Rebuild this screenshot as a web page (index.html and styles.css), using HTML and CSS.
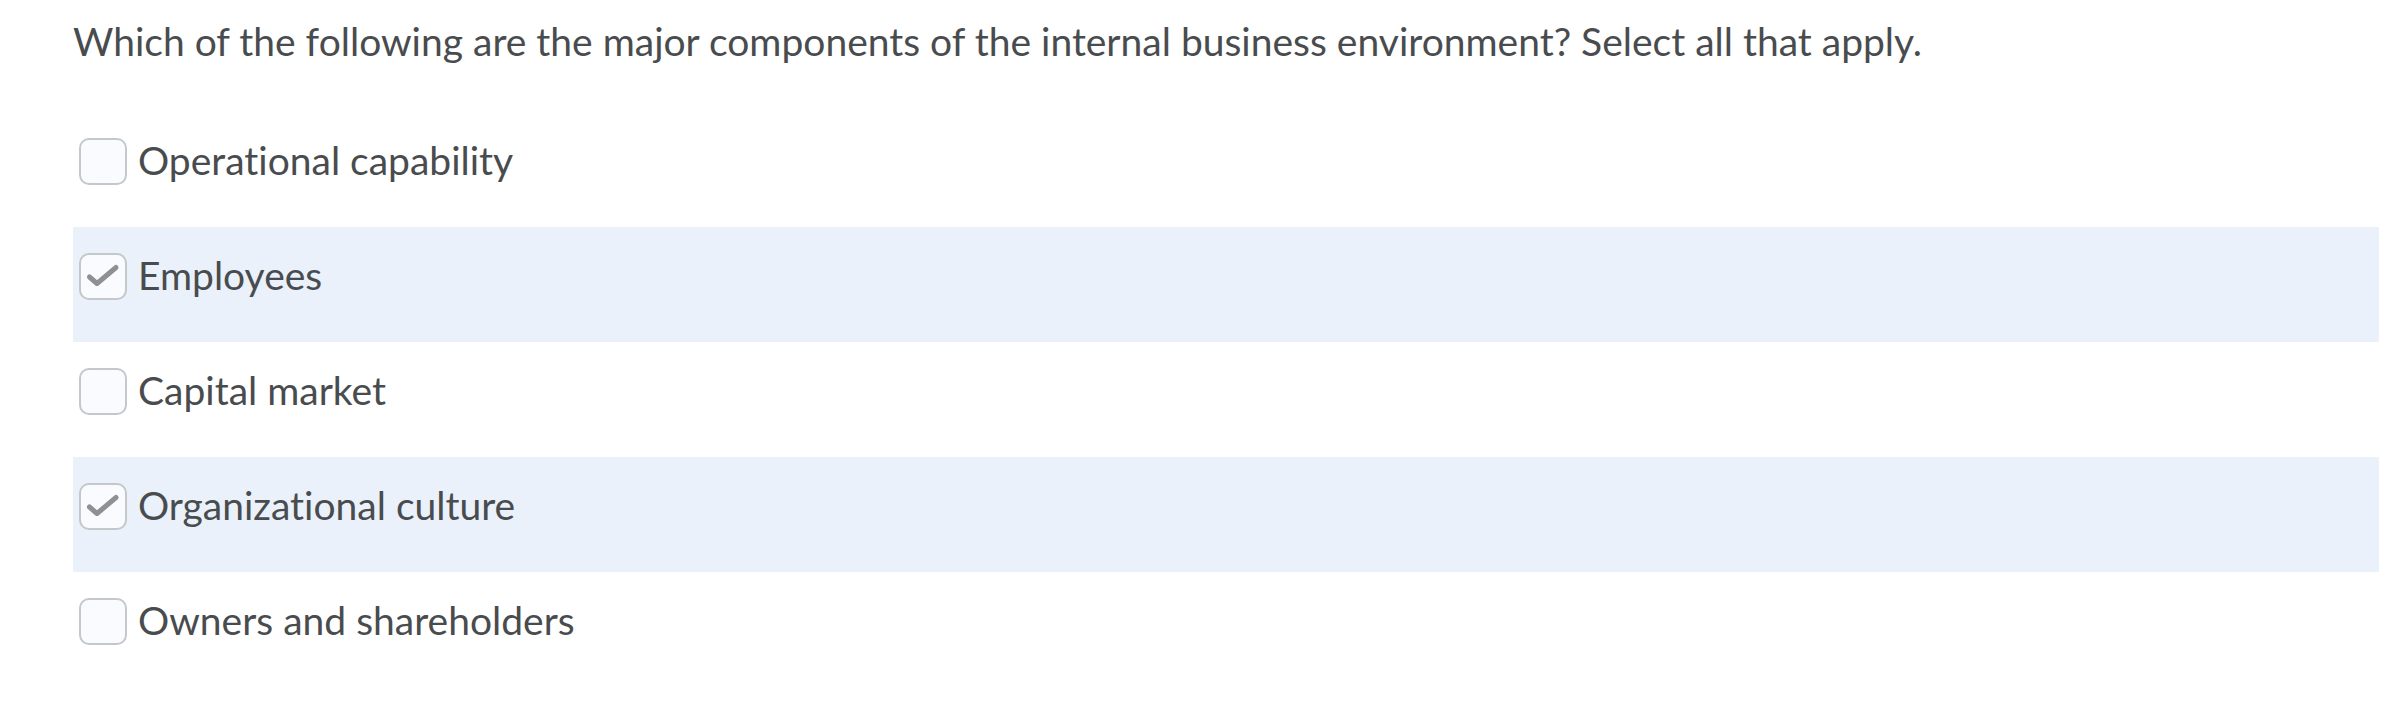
FILE: index.html
```html
<!DOCTYPE html>
<html lang="en">
<head>
<meta charset="utf-8">
<title>Quiz question</title>
<link rel="stylesheet" href="styles.css">
</head>
<body>
<div class="question">
  <p class="prompt">Which of the following are the major components of the internal business environment? Select all that apply.</p>
  <ul class="choices">
    <li class="choice">
      <span class="box"></span>
      <span class="label">Operational capability</span>
    </li>
    <li class="choice selected">
      <span class="box"><svg class="tick" viewBox="0 0 48 47"><path d="M10.5 24 L18 30.5 L37 14.5"/></svg></span>
      <span class="label">Employees</span>
    </li>
    <li class="choice">
      <span class="box"></span>
      <span class="label">Capital market</span>
    </li>
    <li class="choice selected">
      <span class="box"><svg class="tick" viewBox="0 0 48 47"><path d="M10.5 24 L18 30.5 L37 14.5"/></svg></span>
      <span class="label">Organizational culture</span>
    </li>
    <li class="choice">
      <span class="box"></span>
      <span class="label">Owners and shareholders</span>
    </li>
  </ul>
</div>
</body>
</html>
```
FILE: styles.css
```css
html, body {
  margin: 0;
  padding: 0;
  background: #ffffff;
}
body {
  font-family: Lato, "Open Sans", sans-serif;
  color: #494c4e;
  font-variant-ligatures: none;
  font-feature-settings: "liga" 0, "dlig" 0;
}
.question {
  padding: 18px 19px 0 73px;
}
.prompt {
  margin: 0;
  font-size: 39px;
  line-height: 47px;
  height: 94px;
}
.choices {
  list-style: none;
  margin: 0;
  padding: 0;
}
.choice {
  display: flex;
  align-items: flex-start;
  height: 115px;
  box-sizing: border-box;
  padding: 25px 0 0 6px;
  gap: 11px;
}
.choice.selected {
  background: #eaf1fb;
}
.box {
  flex: none;
  width: 48px;
  height: 47px;
  margin-top: 1px;
  box-sizing: border-box;
  border: 2px solid #c4c8cb;
  border-radius: 10px;
  background: #f9fbff;
  position: relative;
}
.tick {
  position: absolute;
  left: -2px;
  top: -2px;
  width: 48px;
  height: 47px;
}
.tick path {
  fill: none;
  stroke: #8d9194;
  stroke-width: 5;
  stroke-linecap: round;
  stroke-linejoin: round;
}
.label {
  font-size: 39px;
  line-height: 47px;
}
```
